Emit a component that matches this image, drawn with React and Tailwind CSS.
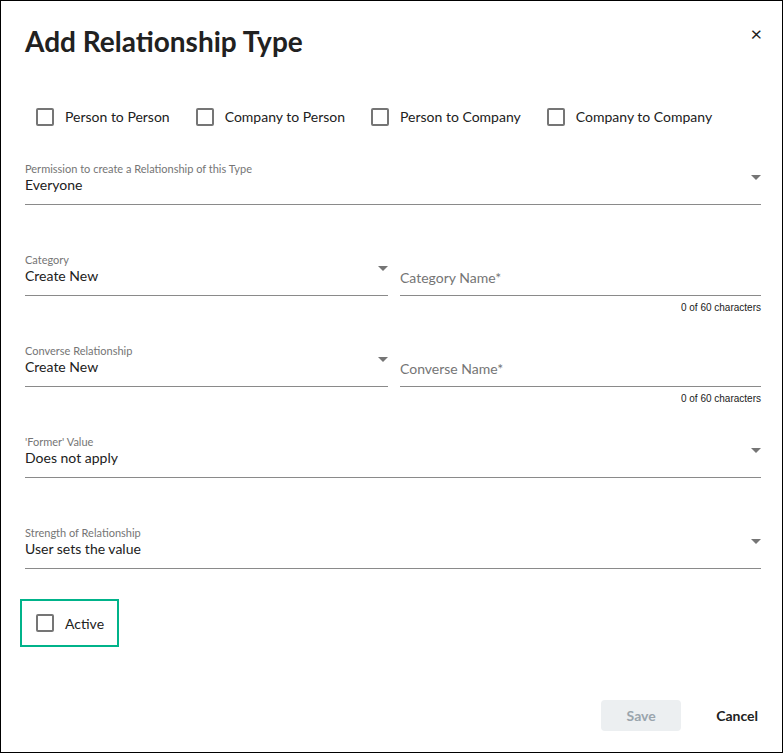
const Box = () => <span className="inline-block w-[18px] h-[18px] border-2 border-[#757575] rounded-[2px] shrink-0" />;
const Arrow = () => <span className="absolute right-0 top-[13px] w-0 h-0 border-l-[5px] border-r-[5px] border-t-[5px] border-l-transparent border-r-transparent border-t-[#757575]" />;
function Select({ label, value, className = "" }) {
  return (
    <div className={"relative h-[43px] border-b border-[#8a8a8a] " + className}>
      <div className="text-[11px] leading-[13px] text-[#757575]">{label}</div>
      <div className="text-[14px] leading-[18px] text-[#212121] mt-[1px]">{value}</div>
      <Arrow />
    </div>
  );
}
function Text({ placeholder }) {
  return (
    <div className="flex-1">
      <div className="h-[43px] border-b border-[#8a8a8a] flex items-end pb-[7px] text-[14px] text-[#757575]">{placeholder}</div>
      <div className="text-right text-[10px] leading-[12px] mt-[6px] text-[#212121]" style={{ fontFamily: "'Liberation Sans', Arial, sans-serif" }}>0 of 60 characters</div>
    </div>
  );
}
export default function App() {
  const types = ["Person to Person", "Company to Person", "Person to Company", "Company to Company"];
  return (
    <div className="w-[783px] h-[753px] border border-black bg-white relative" style={{ fontFamily: "Lato, 'Open Sans', sans-serif" }}>
      <div className="absolute right-[20px] top-[22px] text-[20px] leading-[20px] text-[#212121]">×</div>
      <div className="px-[24px]">
        <h1 className="text-[28px] font-bold text-[#212121] leading-[32px] pt-[24px]">Add Relationship Type</h1>
        <div className="flex items-center mt-[49px] pl-[11px] text-[14px] text-[#212121]">
          {types.map((t, i) => (
            <label key={t} className={"flex items-center gap-[11px] " + (i ? "ml-[26px]" : "")}>
              <Box /><span>{t}</span>
            </label>
          ))}
        </div>
        <Select className="mt-[35px] mr-[-3px]" label="Permission to create a Relationship of this Type" value="Everyone" />
        <div className="flex gap-[12px] mt-[48px] mr-[-3px]">
          <Select className="w-[363px]" label="Category" value="Create New" />
          <Text placeholder="Category Name*" />
        </div>
        <div className="flex gap-[12px] mt-[30px] mr-[-3px]">
          <Select className="w-[363px]" label="Converse Relationship" value="Create New" />
          <Text placeholder="Converse Name*" />
        </div>
        <Select className="mt-[30px] mr-[-3px]" label="'Former' Value" value="Does not apply" />
        <Select className="mt-[48px] mr-[-3px]" label="Strength of Relationship" value="User sets the value" />
        <div className="mt-[30px] ml-[-5px] w-[99px] h-[48px] border-2 border-[#00b38a] flex items-center pl-[14px] gap-[11px] text-[14px] text-[#212121]">
          <Box /><span>Active</span>
        </div>
      </div>
      <div className="absolute right-[24px] bottom-[21px] flex items-center gap-[35px]">
        <div className="w-[80px] h-[31px] rounded bg-[#eceff1] text-[#9aa5ad] font-bold text-[14px] flex items-center justify-center">Save</div>
        <div className="text-[14px] font-bold text-[#212121]">Cancel</div>
      </div>
    </div>
  );
}
